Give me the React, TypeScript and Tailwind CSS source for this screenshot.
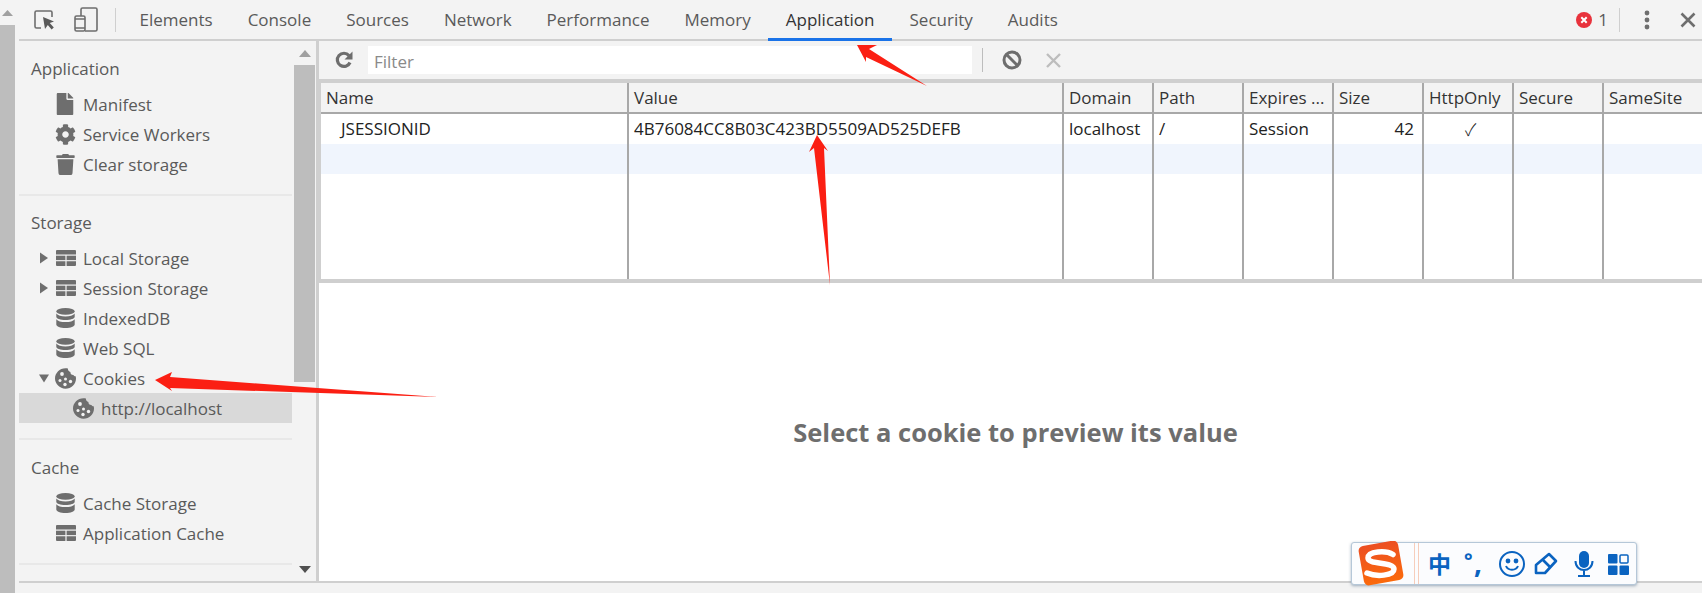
import React from "react";
import { FaCog, FaFile, FaTrash } from "react-icons/fa";

const font = "font-['Open_Sans','Noto_Sans',sans-serif]";

const tabs = ["Elements", "Console", "Sources", "Network", "Performance", "Memory", "Application", "Security", "Audits"];

const columns = [
  { name: "Name", width: "w-[308px]" },
  { name: "Value", width: "w-[435px]" },
  { name: "Domain", width: "w-[90px]" },
  { name: "Path", width: "w-[90px]" },
  { name: "Expires ...", width: "w-[90px]" },
  { name: "Size", width: "w-[90px]" },
  { name: "HttpOnly", width: "w-[90px]" },
  { name: "Secure", width: "w-[90px]" },
  { name: "SameSite", width: "flex-1" },
];

const cookie = ["JSESSIONID", "4B76084CC8B03C423BD5509AD525DEFB", "localhost", "/", "Session", "42", "✓", "", ""];

function GridIcon() {
  return (
    <svg className="ml-[1px]" width="20" height="16" viewBox="0 0 20 16" fill="#6e6e6e">
      <path d="M1 0h18a1 1 0 0 1 1 1v3.500H0V1a1 1 0 0 1 1-1z" />
      <rect x="0" y="5.700" width="9.400" height="4.400" />
      <rect x="10.600" y="5.700" width="9.400" height="4.400" />
      <path d="M0 11.300h9.400V16H1a1 1 0 0 1-1-1z" />
      <path d="M10.600 11.300H20V15a1 1 0 0 1-1 1h-8.400z" />
    </svg>
  );
}

function DbIcon() {
  return (
    <svg width="19" height="20" viewBox="0 0 19 20" fill="#6e6e6e">
      <ellipse cx="9.500" cy="3.400" rx="9.200" ry="3.400" />
      <path d="M0.300 5.600c1.500 2 4.800 2.900 9.200 2.900s7.700-.9 9.200-2.900v3.100c0 1.900-4.100 3.300-9.200 3.300S.3 10.600.3 8.700z" />
      <path d="M0.300 11.200c1.500 2 4.800 2.900 9.200 2.900s7.700-.9 9.200-2.900v5.300c0 1.900-4.100 3.500-9.200 3.500S.3 18.400.3 16.500z" />
    </svg>
  );
}

function CookieIcon() {
  return (
    <svg width="21" height="21" viewBox="0 0 21 21">
      <path
        d="M10.500 0.300c.9 0 1.700.1 2.400.3-.1 1.700 1 3 2.500 3.300-.1 1.800 1.200 3.200 3 3.100.4.900 1.600 1.300 2.300 1.200.2.800.3 1.500.3 2.300 0 5.700-4.700 10.200-10.500 10.200S0 15.800 0 10.500 4.700.3 10.500.3z"
        fill="#6e6e6e"
      />
      <g fill="#f3f3f3">
        <circle cx="7" cy="6" r="1.900" />
        <circle cx="5" cy="12.500" r="1.500" />
        <circle cx="10.500" cy="11" r="1.500" />
        <circle cx="10" cy="16.500" r="1.700" />
        <circle cx="15.500" cy="13.500" r="1.700" />
      </g>
    </svg>
  );
}

function Caret({ open }: { open?: boolean }) {
  return (
    <svg width="12" height="12" viewBox="0 0 12 12" fill="#6e6e6e">
      {open ? <path d="M1 2.500h10L6 10.500z" /> : <path d="M2 0.500v11L10 6z" />}
    </svg>
  );
}

function TreeRow({
  icon,
  label,
  caret,
  open,
  selected,
}: {
  icon: React.ReactNode;
  label: string;
  caret?: boolean;
  open?: boolean;
  selected?: boolean;
}) {
  return (
    <div className={`flex h-[30px] items-center ${selected ? "bg-[#d9d9d9] pl-[52px]" : "pl-[16px]"}`}>
      {!selected && <span className="flex w-[18px] justify-center">{caret && <Caret open={open} />}</span>}
      <span className="flex w-[24px] justify-center text-[#6e6e6e]">{icon}</span>
      <span className="ml-[6px] pt-[1px] text-[17px] text-[#5a5a5a]">{label}</span>
    </div>
  );
}

function Section({ title, children, top = "pt-[12px]" }: { title: string; children: React.ReactNode; top?: string }) {
  return (
    <div className={`border-b-2 border-[#e8e8e8] pb-[15px] ${top}`}>
      <div className="mb-[6px] flex h-[30px] items-center pl-[12px] pt-[1px] text-[17px] text-[#5a5a5a]">{title}</div>
      {children}
    </div>
  );
}

function Sidebar() {
  return (
    <div className="flex w-[300px] border-r-[3px] border-[#cfcfcf] bg-[#f3f3f3]">
      <div className="h-full w-[273px] overflow-hidden">
        <Section title="Application">
          <TreeRow icon={<FaFile size={22} />} label="Manifest" />
          <TreeRow icon={<FaCog size={21} />} label="Service Workers" />
          <TreeRow icon={<FaTrash size={21} />} label="Clear storage" />
        </Section>
        <Section title="Storage" top="pt-[11px]">
          <TreeRow icon={<GridIcon />} label="Local Storage" caret />
          <TreeRow icon={<GridIcon />} label="Session Storage" caret />
          <TreeRow icon={<DbIcon />} label="IndexedDB" />
          <TreeRow icon={<DbIcon />} label="Web SQL" />
          <TreeRow icon={<CookieIcon />} label="Cookies" caret open />
          <TreeRow icon={<CookieIcon />} label="http://localhost" selected />
        </Section>
        <Section title="Cache">
          <TreeRow icon={<DbIcon />} label="Cache Storage" />
          <TreeRow icon={<GridIcon />} label="Application Cache" />
        </Section>
      </div>
      <div className="ml-[2px] flex w-[21px] flex-col items-center">
        <svg className="mt-[9px] mb-[8px]" width="12" height="7" viewBox="0 0 12 7" fill="#a0a0a0">
          <path d="M6 0l6 7H0z" />
        </svg>
        <div className="h-[317px] w-full bg-[#bdbdbd]" />
        <div className="flex-1" />
        <svg className="mb-[8px]" width="12" height="7" viewBox="0 0 12 7" fill="#505050">
          <path d="M0 0h12L6 7z" />
        </svg>
      </div>
    </div>
  );
}

function TopBar() {
  return (
    <div className="flex h-[41px] items-start border-b-2 border-[#cfcfcf] bg-[#f3f3f3]">
      <div className="flex h-[39px] items-center pl-[15px]">
        <svg width="22" height="22" viewBox="0 0 22 22" fill="none">
          <path d="M7 19H2.500A1.500 1.500 0 0 1 1 17.500V3.500A1.500 1.500 0 0 1 2.500 2h14A1.500 1.500 0 0 1 18 3.500V8" stroke="#6e6e6e" strokeWidth="1.600" />
          <path d="M9 8l11 4.500-4.200 1.500 4 4.500-2.200 2-3.800-4.600L11 20z" fill="#5a5a5a" />
        </svg>
        <svg className="ml-[18px]" width="24" height="25" viewBox="0 0 24 25" fill="none" stroke="#6e6e6e" strokeWidth="1.600">
          <path d="M7 9V2.500A1.500 1.500 0 0 1 8.500 1h13A1.500 1.500 0 0 1 23 2.500v20a1.500 1.500 0 0 1-1.500 1.500H11" />
          <rect x="1" y="9" width="10" height="15" rx="1.500" />
          <path d="M1 12h10M1 21h10" />
        </svg>
        <div className="ml-[17px] h-[24px] w-px bg-[#cfcfcf]" />
      </div>
      <div className="ml-[6px] flex">
        {tabs.map((tab) => (
          <div
            key={tab}
            className={`flex h-[41px] items-center border-b-[3px] px-[17.5px] pt-[2px] text-[17px] ${
              tab === "Application" ? "border-[#1a73e8] text-[#333333]" : "border-transparent text-[#5a5a5a]"
            }`}
          >
            {tab}
          </div>
        ))}
      </div>
      <div className="ml-auto flex h-[39px] items-center pr-[6px]">
        <svg width="16" height="16" viewBox="0 0 16 16">
          <circle cx="8" cy="8" r="8" fill="#e8323c" />
          <path d="M5.300 5.300l5.400 5.400M10.700 5.300l-5.400 5.400" stroke="#fff" strokeWidth="2" />
        </svg>
        <span className="ml-[6px] text-[17px] text-[#5a5a5a]">1</span>
        <div className="ml-[11px] h-[24px] w-px bg-[#cfcfcf]" />
        <svg className="ml-[24px]" width="6" height="20" viewBox="0 0 6 20" fill="#6e6e6e">
          <circle cx="3" cy="3" r="2.400" />
          <circle cx="3" cy="10" r="2.400" />
          <circle cx="3" cy="17" r="2.400" />
        </svg>
        <svg className="ml-[30px]" width="16" height="16" viewBox="0 0 16 16" stroke="#6e6e6e" strokeWidth="2.600">
          <path d="M1.500 1.500l13 13M14.500 1.500l-13 13" />
        </svg>
      </div>
    </div>
  );
}

function Toolbar() {
  return (
    <div className="flex h-[38px] items-center bg-[#f3f3f3] pl-[15px]">
      <svg width="20" height="20" viewBox="0 0 20 20" fill="none">
        <path d="M16 12.500A6.600 6.600 0 1 1 15 5.600" stroke="#6e6e6e" strokeWidth="3.200" />
        <path d="M18.500 1.500v8h-8z" fill="#6e6e6e" />
      </svg>
      <div className="ml-[14px] flex h-[28px] w-[604px] items-center bg-white pl-[6px] pt-[3px] text-[17px] text-[#8a8a8a]">Filter</div>
      <div className="ml-[10px] h-[24px] w-px bg-[#bdbdbd]" />
      <svg className="ml-[19px]" width="20" height="20" viewBox="0 0 20 20" fill="none" stroke="#6e6e6e" strokeWidth="3">
        <circle cx="10" cy="10" r="8" />
        <path d="M4.500 4.500l11 11" />
      </svg>
      <svg className="ml-[24px]" width="15" height="15" viewBox="0 0 15 15" stroke="#bdbdbd" strokeWidth="2.400">
        <path d="M1 1l13 13M14 1L1 14" />
      </svg>
    </div>
  );
}

function CookieTable() {
  return (
    <div className="flex h-[204px] flex-col border-y-[4px] border-l-2 border-[#cfcfcf] text-[17px]">
      <div className="flex h-[31px] border-b-2 border-[#a8a8a8] bg-[#f3f3f3]">
        {columns.map((col) => (
          <div key={col.name} className={`${col.width} flex items-center overflow-hidden whitespace-nowrap border-r-2 border-[#a8a8a8] pl-[5px] text-[#333333] last:border-r-0`}>
            {col.name}
          </div>
        ))}
      </div>
      <div className="flex h-[30px] bg-white">
        {columns.map((col, i) => (
          <div
            key={col.name}
            className={`${col.width} flex items-center border-r-2 border-[#a8a8a8] text-[#222222] last:border-r-0 ${
              i === 0 ? "pl-[20px]" : "pl-[5px]"
            } ${i === 5 ? "justify-end pr-[8px]" : ""} ${i === 6 ? "justify-center pl-0 font-['Noto_Sans_CJK_SC',sans-serif] font-light" : ""}`}
          >
            {cookie[i]}
          </div>
        ))}
      </div>
      <div className="flex h-[30px] bg-[#f0f5fd]">
        {columns.map((col) => (
          <div key={col.name} className={`${col.width} border-r-2 border-[#a8a8a8] last:border-r-0`} />
        ))}
      </div>
      <div className="flex flex-1 bg-white">
        {columns.map((col) => (
          <div key={col.name} className={`${col.width} border-r-2 border-[#a8a8a8] last:border-r-0`} />
        ))}
      </div>
    </div>
  );
}

function ImeBar() {
  return (
    <div className="absolute left-[1351px] top-[542px] flex h-[43px] w-[286px] items-center rounded-[3px] border border-[#b5c7d8] bg-[#fbfcfe] shadow-[0_1px_3px_rgba(70,100,130,0.5)]">
      <svg className="absolute left-[6px] top-[-2px]" width="48" height="46" viewBox="0 0 48 46">
        <defs>
          <linearGradient id="sogou" x1="0" y1="0" x2="0" y2="1">
            <stop offset="0" stopColor="#ec4f22" />
            <stop offset="1" stopColor="#fb6a0c" />
          </linearGradient>
        </defs>
        <rect x="3" y="2" width="40" height="40" rx="5" fill="url(#sogou)" transform="rotate(-10 23 22)" />
        <path d="M35 13.500C28 9 10 10 10 17c0 7 26 3.500 26 11 0 7-18 8-27 4" fill="none" stroke="#fff" strokeWidth="5.500" strokeLinecap="round" />
      </svg>
      <div className="absolute left-[62px] top-0 h-full w-[5px] border-x border-[#f6cdbb]" />
      <span className="absolute left-[76px] top-[6px] text-[23px] leading-[28px] font-bold text-[#0a63c0] font-['Noto_Sans_CJK_SC',sans-serif]">中</span>
      <span className="absolute left-[112px] top-[6px] text-[20px] leading-[24px] font-bold text-[#0a63c0]">°</span>
      <span className="absolute left-[122px] top-[3px] text-[28px] leading-[32px] font-bold text-[#0a63c0]">,</span>
      <svg className="absolute left-[147px] top-[8px]" width="26" height="26" viewBox="0 0 26 26" fill="none" stroke="#0a63c0" strokeWidth="2">
        <circle cx="13" cy="13" r="12" />
        <path d="M7 15c2 5 10 5 12 0" />
        <circle cx="9" cy="10" r="1.400" fill="#0a63c0" />
        <circle cx="17" cy="10" r="1.400" fill="#0a63c0" />
      </svg>
      <svg className="absolute left-[182px] top-[9px]" width="24" height="24" viewBox="0 0 24 24" fill="none" stroke="#0a63c0" strokeWidth="2.600">
        <path d="M15 2l7 7-11 12H2v-8z" strokeLinejoin="round" />
        <path d="M9 8l7 7" />
      </svg>
      <svg className="absolute left-[222px] top-[7px]" width="20" height="28" viewBox="0 0 20 28">
        <rect x="5" y="1" width="10" height="17" rx="5" fill="#0a63c0" />
        <path d="M1.500 11c0 12 17 12 17 0M10 20v5M4 26h12" fill="none" stroke="#0a63c0" strokeWidth="2" />
      </svg>
      <svg className="absolute left-[256px] top-[11px]" width="21" height="21" viewBox="0 0 21 21" fill="#0a63c0">
        <rect x="0" y="0" width="9.500" height="9.500" rx="1" />
        <rect x="12" y="1" width="8" height="8" rx="1" fill="none" stroke="#0a63c0" strokeWidth="1.500" />
        <rect x="0" y="11.500" width="9.500" height="9.500" rx="1" />
        <rect x="11.500" y="11.500" width="9.500" height="9.500" rx="1" />
      </svg>
    </div>
  );
}

function Arrows() {
  return (
    <svg className="absolute left-0 top-0 pointer-events-none" width="1702" height="593" fill="#fb1f13">
      <polygon points="857,45 877,45 869,49 927,86 866,57 866,62" />
      <polygon points="817,135 828,151 824,148 830,285 814,148 809,152" />
      <polygon points="155,380 172,372 170,377 438,397 170,388 172,391" />
    </svg>
  );
}

export default function App() {
  return (
    <div className={`relative flex h-[593px] w-[1702px] overflow-hidden bg-white ${font}`}>
      {/* outer scrollbar */}
      <div className="flex w-[19px] flex-col border-r-4 border-[#f3f3f3] bg-[#f3f3f3]">
        <div className="flex h-[25px] items-start justify-center pt-[10px]">
          <svg width="11" height="6" viewBox="0 0 11 6" fill="#a0a0a0">
            <path d="M5.500 0l5.500 6H0z" />
          </svg>
        </div>
        <div className="flex-1 bg-[#bdbdbd]" />
      </div>
      <div className="flex min-w-0 flex-1 flex-col">
        <TopBar />
        <div className="flex min-h-0 flex-1">
          <Sidebar />
          <div className="flex min-w-0 flex-1 flex-col">
            <Toolbar />
            <CookieTable />
            <div className="flex flex-1 items-center justify-center bg-white pl-[10px] pt-[1px] text-[25.5px] font-bold text-[#6e6e6e]">
              Select a cookie to preview its value
            </div>
          </div>
        </div>
        <div className="h-[12px] border-t-2 border-[#cfcfcf] bg-[#f3f3f3]" />
      </div>
      <ImeBar />
      <Arrows />
    </div>
  );
}
